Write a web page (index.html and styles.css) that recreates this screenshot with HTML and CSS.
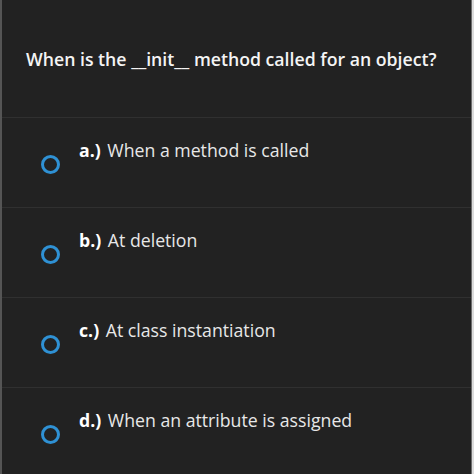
FILE: index.html
```html
<!DOCTYPE html>
<html>
<head>
  <title>Quiz Question</title>
  <link rel="stylesheet" href="styles.css">
</head>
<body>
  <div class="quiz-card">
    <div class="question">
      <h2 class="question-text">When is the __init__ method called for an object?</h2>
    </div>

    <div class="option">
      <span class="radio"></span>
      <p class="option-text"><b>a.)</b> When a method is called</p>
    </div>
    <div class="option">
      <span class="radio"></span>
      <p class="option-text"><b>b.)</b> At deletion</p>
    </div>
    <div class="option">
      <span class="radio"></span>
      <p class="option-text"><b>c.)</b> At class instantiation</p>
    </div>
    <div class="option">
      <span class="radio"></span>
      <p class="option-text"><b>d.)</b> When an attribute is assigned</p>
    </div>
  </div>
</body>
</html>
```

FILE: styles.css
```css
/* Body Styling */
body {
  margin: 0;
  background-color: #dcdcdc;
  font-family: "Open Sans", Arial, sans-serif;
}

/* Card Styling */
.quiz-card {
  width: 469px;
  height: 474px;
  overflow: hidden;
  background-color: #222222;
  border-left: 2px solid #555555;
  border-right: 1px solid #6c6c6c;
}

/* Question Styling */
.question {
  height: 117px;
  display: flex;
  align-items: center;
  padding-left: 24px;
  border-bottom: 1px solid #303030;
}

.question-text {
  margin: 0;
  font-size: 17.7px;
  font-weight: 600;
  color: #f4f4f4;
}

/* Option Styling */
.option {
  height: 89px;
  display: flex;
  align-items: flex-start;
  padding-left: 39px;
  border-bottom: 1px solid #303030;
}

.radio {
  width: 13px;
  height: 13px;
  margin-top: 37px;
  border: 3px solid #2f91d4;
  border-radius: 50%;
}

.option-text {
  margin: 21px 0 0 19px;
  font-size: 17.7px;
  line-height: 22px;
  color: #e8e8e8;
}

.option-text b {
  color: #ffffff;
  font-weight: 700;
  margin-right: 2px;
}
```
